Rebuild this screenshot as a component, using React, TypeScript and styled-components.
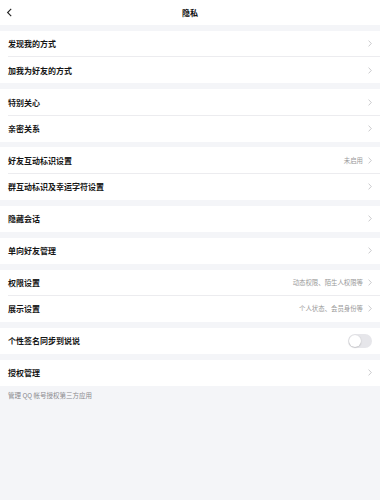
import styled, { createGlobalStyle } from "styled-components";

const GlobalStyle = createGlobalStyle`
  html, body {
    margin: 0;
    padding: 0;
    background: #f4f5f8;
  }
  body {
    font-family: "Noto Sans CJK SC", "Noto Sans", sans-serif;
    -webkit-font-smoothing: antialiased;
  }
`;

const Page = styled.div`
  width: 380px;
  min-height: 500px;
  background: #f4f5f8;
  display: flex;
  flex-direction: column;
`;

const Header = styled.div`
  height: 25px;
  background: #fff;
  display: grid;
  grid-template-columns: 40px 1fr 40px;
  align-items: center;
`;

const Back = styled.div`
  padding-left: 6px;
  display: flex;
  align-items: center;
`;

const Title = styled.div`
  text-align: center;
  font-size: 8px;
  font-weight: 600;
  color: #111;
`;

const Group = styled.div`
  margin-top: 5.7px;
  background: #fff;
  display: flex;
  flex-direction: column;
`;

const Row = styled.div<{ divider?: boolean }>`
  height: 26.3px;
  display: flex;
  align-items: center;
  padding: 0 8px;
  position: relative;
  box-sizing: border-box;
  &::after {
    content: "";
    display: ${(p) => (p.divider ? "block" : "none")};
    position: absolute;
    left: 8px;
    right: 0;
    bottom: 0;
    height: 0.5px;
    background: #ececef;
  }
`;

const Label = styled.span`
  flex: 1;
  font-size: 8px;
  font-weight: 600;
  color: #161616;
`;

const Hint = styled.span`
  font-size: 6.4px;
  color: #999;
  margin-right: 5px;
`;

const Toggle = styled.div`
  width: 24px;
  height: 14px;
  border-radius: 7px;
  background: #e6e6ea;
  display: flex;
  align-items: center;
  padding: 1px;
  box-sizing: border-box;
  &::before {
    content: "";
    width: 12px;
    height: 12px;
    border-radius: 50%;
    background: #fff;
    box-shadow: 0 0.5px 1.5px rgba(0, 0, 0, 0.25);
  }
`;

const Footer = styled.div`
  padding: 4px 8px;
  font-size: 6.5px;
  color: #8a8a8f;
`;

function Chevron() {
  return (
    <svg width="4" height="7" viewBox="0 0 4 7">
      <path
        d="M0.6 0.6 L3.3 3.5 L0.6 6.4"
        fill="none"
        stroke="#b5b5b8"
        strokeWidth="0.7"
      />
    </svg>
  );
}

type Item = { label: string; hint?: string; toggle?: boolean };

const groups: Item[][] = [
  [{ label: "发现我的方式" }, { label: "加我为好友的方式" }],
  [{ label: "特别关心" }, { label: "亲密关系" }],
  [
    { label: "好友互动标识设置", hint: "未启用" },
    { label: "群互动标识及幸运字符设置" },
  ],
  [{ label: "隐藏会话" }],
  [{ label: "单向好友管理" }],
  [
    { label: "权限设置", hint: "动态权限、陌生人权限等" },
    { label: "展示设置", hint: "个人状态、会员身份等" },
  ],
  [{ label: "个性签名同步到说说", toggle: true }],
  [{ label: "授权管理" }],
];

export default function App() {
  return (
    <Page>
      <GlobalStyle />
      <Header>
        <Back>
          <svg width="7" height="9" viewBox="0 0 7 9">
            <path
              d="M5.2 0.8 L1.6 4.5 L5.2 8.2"
              fill="none"
              stroke="#222"
              strokeWidth="1.1"
            />
          </svg>
        </Back>
        <Title>隐私</Title>
        <div />
      </Header>
      {groups.map((items, gi) => (
        <Group key={gi}>
          {items.map((item, i) => (
            <Row key={item.label} divider={i < items.length - 1}>
              <Label>{item.label}</Label>
              {item.hint && <Hint>{item.hint}</Hint>}
              {item.toggle ? <Toggle /> : <Chevron />}
            </Row>
          ))}
        </Group>
      ))}
      <Footer>管理 QQ 帐号授权第三方应用</Footer>
    </Page>
  );
}
